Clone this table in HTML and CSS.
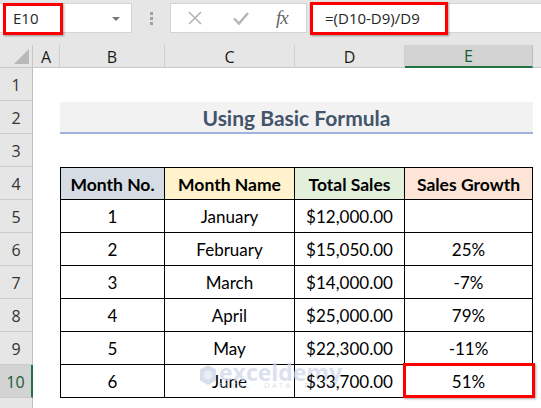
FILE: index.html
```html
<!DOCTYPE html>
<html>
<head>
<meta charset="utf-8">
<link rel="stylesheet" href="styles.css">
</head>
<body>
<div class="app">
  <div class="toolbar">
    <div class="namebox">
      <span class="nb-text">E10</span>
      <span class="nb-arrow"></span>
      <div class="redbox rb-name"></div>
    </div>
    <div class="dots"><i></i><i></i><i></i></div>
    <div class="fbuttons">
      <svg class="ic-x" width="16" height="16" viewBox="0 0 16 16"><path d="M2 2 L14 14 M14 2 L2 14" stroke="#b4b4b4" stroke-width="1.6" fill="none"/></svg>
      <svg class="ic-check" width="18" height="16" viewBox="0 0 18 16"><path d="M2 8.5 L7 13.5 L16 3" stroke="#b4b4b4" stroke-width="2.4" fill="none"/></svg>
      <span class="fx">fx</span>
    </div>
    <div class="formula">
      <span class="f-text">=(D10-D9)/D9</span>
      <div class="redbox rb-formula"></div>
    </div>
  </div>

  <div class="sheet">
    <div class="corner"><span class="tri"></span></div>
    <div class="colh">A</div>
    <div class="colh">B</div>
    <div class="colh">C</div>
    <div class="colh">D</div>
    <div class="colh sel">E</div>
    <div class="colh rest"></div>

    <div class="rowh">1</div>
    <div class="blank span6"></div>

    <div class="rowh">2</div>
    <div class="blank"></div>
    <div class="title">Using Basic Formula</div>
    <div class="blank"></div>

    <div class="rowh">3</div>
    <div class="blank span6"></div>

    <div class="rowh">4</div>
    <div class="blank"></div>
    <div class="cell th first top c-b">Month No.</div>
    <div class="cell th top c-c">Month Name</div>
    <div class="cell th top c-d">Total Sales</div>
    <div class="cell th top c-e">Sales Growth</div>
    <div class="blank"></div>

    <div class="rowh">5</div>
    <div class="blank"></div>
    <div class="cell first">1</div>
    <div class="cell">January</div>
    <div class="cell">$12,000.00</div>
    <div class="cell"></div>
    <div class="blank"></div>

    <div class="rowh">6</div>
    <div class="blank"></div>
    <div class="cell first">2</div>
    <div class="cell">February</div>
    <div class="cell">$15,050.00</div>
    <div class="cell">25%</div>
    <div class="blank"></div>

    <div class="rowh">7</div>
    <div class="blank"></div>
    <div class="cell first">3</div>
    <div class="cell">March</div>
    <div class="cell">$14,000.00</div>
    <div class="cell">-7%</div>
    <div class="blank"></div>

    <div class="rowh">8</div>
    <div class="blank"></div>
    <div class="cell first">4</div>
    <div class="cell">April</div>
    <div class="cell">$25,000.00</div>
    <div class="cell">79%</div>
    <div class="blank"></div>

    <div class="rowh">9</div>
    <div class="blank"></div>
    <div class="cell first">5</div>
    <div class="cell">May</div>
    <div class="cell">$22,300.00</div>
    <div class="cell">-11%</div>
    <div class="blank"></div>

    <div class="rowh sel">10</div>
    <div class="blank"></div>
    <div class="cell first">6</div>
    <div class="cell wm-host">June
      <div class="watermark" aria-hidden="true">
        <svg class="wm-logo" width="18" height="22" viewBox="0 0 18 22"><path d="M9 1 L17 5.5 L17 16.5 L9 21 L1 16.5 L1 5.5 Z" fill="#c9d3e6"/><path d="M9 6 L13 8.5 L13 13.5 L9 16 L5 13.5 L5 8.5 Z" fill="#e3e8f2"/></svg>
        <div class="wm-text">
          <span class="wm-big">exceldemy</span>
          <span class="wm-small">EXCEL · DATA · BI</span>
        </div>
      </div>
    </div>
    <div class="cell">$33,700.00</div>
    <div class="cell active">51%<div class="redbox rb-cell"></div></div>
    <div class="blank"></div>

    <div class="rowh empty"></div>
    <div class="blank span6"></div>
  </div>
</div>
</body>
</html>
```

FILE: styles.css
```css
* { box-sizing: border-box; }
html, body { margin: 0; padding: 0; }
body {
  width: 541px;
  height: 408px;
  overflow: hidden;
  background: #ffffff;
  font-family: "Lato", "Open Sans", sans-serif;
}
.app {
  width: 541px;
  height: 408px;
  background: #e6e6e6;
  display: flex;
  flex-direction: column;
}
.toolbar {
  height: 45px;
  display: flex;
  align-items: flex-start;
  padding-top: 3px;
}
.namebox {
  position: relative;
  width: 132px;
  height: 30px;
  background: #fff;
  border: 1px solid #d4d4d4;
  border-left: none;
  display: flex;
  align-items: center;
  padding-left: 13px;
}
.nb-text {
  font-family: "Open Sans", sans-serif;
  font-size: 15px;
  color: #262626;
}
.nb-arrow {
  position: absolute;
  right: 11px;
  top: 13px;
  width: 0; height: 0;
  border-left: 4px solid transparent;
  border-right: 4px solid transparent;
  border-top: 4px solid #777;
}
.redbox {
  position: absolute;
  border: 3px solid #ff0000;
  box-shadow: 1px 1px 2px rgba(0,0,0,0.35);
  pointer-events: none;
}
.rb-name { left: 3px; top: -1px; width: 60px; height: 32px; }
.dots {
  width: 38px;
  height: 30px;
  display: flex;
  flex-direction: column;
  align-items: center;
  justify-content: center;
  gap: 2px;
}
.dots i {
  display: block;
  width: 3px;
  height: 3px;
  background: #a0a0a0;
}
.fbuttons {
  width: 137px;
  height: 30px;
  background: #fff;
  border: 1px solid #d4d4d4;
  display: flex;
  align-items: center;
  padding-left: 16px;
}
.ic-x { margin-right: 29px; }
.ic-check { margin-right: 26px; }
.fx {
  font-family: "Liberation Serif", serif;
  font-style: italic;
  font-size: 19px;
  color: #666;
  letter-spacing: -1px;
}
.formula {
  position: relative;
  flex: 1;
  height: 30px;
  margin-left: 2px;
  background: #fff;
  border: 1px solid #d4d4d4;
  border-right: none;
  display: flex;
  align-items: center;
  padding-left: 15px;
}
.f-text {
  font-family: "Open Sans", sans-serif;
  font-size: 15px;
  color: #262626;
}
.rb-formula { left: 0px; top: -2px; width: 138px; height: 33px; }

.sheet {
  flex: 1;
  display: grid;
  grid-template-columns: 33px 27px 105px 130px 110px 128px 8px;
  grid-template-rows: 23px repeat(10, 33px) 10px;
  background: #fff;
}
.corner {
  background: #e6e6e6;
  border-right: 1px solid #c8c8c8;
  border-bottom: 1px solid #c8c8c8;
  position: relative;
}
.tri {
  position: absolute;
  right: 3px;
  bottom: 3px;
  width: 0; height: 0;
  border-left: 15px solid transparent;
  border-bottom: 15px solid #b9b9b9;
}
.colh {
  background: #e6e6e6;
  border-right: 1px solid #cfcfcf;
  border-bottom: 1px solid #c8c8c8;
  display: flex;
  align-items: center;
  justify-content: center;
  font-family: "Open Sans", sans-serif;
  font-size: 16px;
  color: #1a1a1a;
  padding-top: 1px;
}
.colh.sel {
  background: #d3d3d3;
  color: #185c37;
  border-bottom: 2px solid #217346;
  border-right: 1px solid #bdbdbd;
}
.colh.rest { border-right: none; background: #e6e6e6; }
.rowh {
  background: #e6e6e6;
  border-right: 1px solid #bdbdbd;
  border-bottom: 1px solid #cbcbcb;
  display: flex;
  align-items: flex-end;
  justify-content: center;
  padding-bottom: 4px;
  font-family: "Open Sans", sans-serif;
  font-size: 16px;
  color: #333;
}
.rowh.sel {
  background: #d3d3d3;
  color: #185c37;
  border-right: 2px solid #217346;
}
.rowh.empty { border-bottom: none; }
.blank { background: #fff; }
.span6 { grid-column: span 6; }
.title {
  grid-column: span 4;
  background: #f2f2f2;
  border-bottom: 2px solid #9fb3dc;
  display: flex;
  align-items: center;
  justify-content: center;
  font-weight: bold;
  font-size: 21px;
  color: #44546a;
  margin-top: 1px;
}
.cell {
  position: relative;
  border-right: 1px solid #000;
  border-bottom: 1px solid #000;
  display: flex;
  align-items: center;
  justify-content: center;
  font-size: 17px;
  color: #000;
  padding-top: 1px;
}
.cell.first { border-left: 1px solid #000; }
.cell.top { border-top: 1px solid #000; }
.th { font-weight: bold; font-size: 17.5px; }
.c-b { background: #d6dce4; }
.c-c { background: #fff2cc; }
.c-d { background: #e2efda; }
.c-e { background: #fce4d6; }
.rb-cell { left: -2px; top: -2px; width: 132px; height: 35px; }
.watermark {
  position: absolute;
  left: 34px;
  top: -4px;
  display: flex;
  align-items: center;
  gap: 2px;
  opacity: 0.75;
  pointer-events: none;
}
.wm-text {
  display: flex;
  flex-direction: column;
  line-height: 1;
}
.wm-big {
  font-family: "Open Sans", sans-serif;
  font-weight: bold;
  font-size: 23px;
  color: #cfd8ea;
}
.wm-small {
  font-family: "Open Sans", sans-serif;
  font-size: 8px;
  color: #d0d6e0;
  letter-spacing: 2px;
  margin-top: -3px;
}
```
